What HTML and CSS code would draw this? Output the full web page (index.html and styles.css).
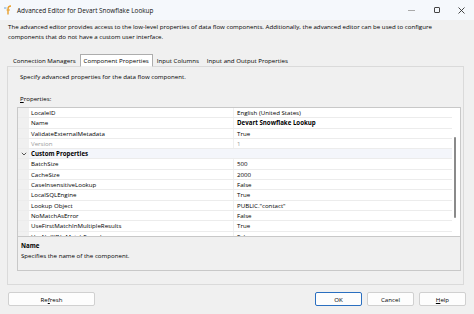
FILE: index.html
```html
<!DOCTYPE html>
<html lang="en">
<head>
    <meta charset="UTF-8">
    <title>Advanced Editor for Devart Snowflake Lookup</title>
    <link rel="stylesheet" href="styles.css">
</head>
<body>
    <div class="titlebar">
        <svg class="app-icon" width="8" height="10" viewBox="0 0 8 10">
            <path d="M0 3h2.5" stroke="#6aa6d8" stroke-width="1"/>
            <path d="M4 9.5V4c0-2 1-3 3-3" stroke="#e8a030" stroke-width="1.4" fill="none"/>
            <path d="M2.5 5h3.5" stroke="#e8a030" stroke-width="1"/>
        </svg>
        <span class="title">Advanced Editor for Devart Snowflake Lookup</span>
        <div class="controls">
            <span class="ctl"><span class="min-line"></span></span>
            <span class="ctl"><span class="max-box"></span></span>
            <span class="ctl">
                <svg width="7" height="7" viewBox="0 0 7 7"><path d="M0.5 0.5l6 6M6.5 0.5l-6 6" stroke="#333" stroke-width="0.9"/></svg>
            </span>
        </div>
    </div>

    <p class="intro">The advanced editor provides access to the low-level properties of data flow components. Additionally, the advanced editor can be used to configure components that do not have a custom user interface.</p>

    <div class="tabs">
        <span class="tab">Connection Managers</span>
        <span class="tab active">Component Properties</span>
        <span class="tab">Input Columns</span>
        <span class="tab">Input and Output Properties</span>
    </div>

    <div class="panel">
        <div class="hint">Specify advanced properties for the data flow component.</div>
        <div class="label"><u>P</u>roperties:</div>

        <div class="grid">
            <div class="rows">
                <div class="row"><span class="gut"></span><span class="name">LocaleID</span><span class="val">English (United States)</span></div>
                <div class="row"><span class="gut"></span><span class="name">Name</span><span class="val bold">Devart Snowflake Lookup</span></div>
                <div class="row"><span class="gut"></span><span class="name">ValidateExternalMetadata</span><span class="val">True</span></div>
                <div class="row dim"><span class="gut"></span><span class="name">Version</span><span class="val">1</span></div>
                <div class="row group">
                    <span class="gut">
                        <svg width="6" height="4" viewBox="0 0 6 4"><path d="M0.8 0.8l2.2 2.2 2.2-2.2" stroke="#444" stroke-width="0.9" fill="none"/></svg>
                    </span>
                    <span class="name">Custom Properties</span><span class="val"></span>
                </div>
                <div class="row"><span class="gut"></span><span class="name">BatchSize</span><span class="val">500</span></div>
                <div class="row"><span class="gut"></span><span class="name">CacheSize</span><span class="val">2000</span></div>
                <div class="row"><span class="gut"></span><span class="name">CaseInsensitiveLookup</span><span class="val">False</span></div>
                <div class="row"><span class="gut"></span><span class="name">LocalSQLEngine</span><span class="val">True</span></div>
                <div class="row"><span class="gut"></span><span class="name">Lookup Object</span><span class="val">PUBLIC."contact"</span></div>
                <div class="row"><span class="gut"></span><span class="name">NoMatchAsError</span><span class="val">False</span></div>
                <div class="row"><span class="gut"></span><span class="name">UseFirstMatchInMultipleResults</span><span class="val">True</span></div>
                <div class="row"><span class="gut"></span><span class="name">UseNullIfNoMatchFound</span><span class="val">False</span></div>
            </div>
            <div class="scroll"><span class="thumb"></span></div>
        </div>

        <div class="desc">
            <div class="desc-title">Name</div>
            <div>Specifies the name of the component.</div>
        </div>
    </div>

    <div class="footer">
        <button class="btn wide">Re<u>f</u>resh</button>
        <span class="spacer"></span>
        <button class="btn primary">OK</button>
        <button class="btn">Cancel</button>
        <button class="btn"><u>H</u>elp</button>
    </div>
</body>
</html>
```

FILE: styles.css
```css
* {
    margin: 0;
    padding: 0;
    box-sizing: border-box;
}
body {
    background-color: #f0f0f0;
    font-family: 'Open Sans', 'Noto Sans', sans-serif;
    font-size: 6.15px;
    color: #000;
    width: 474px;
    height: 314px;
    overflow: hidden;
}
.titlebar {
    height: 20px;
    background-color: #f5f8fc;
    display: flex;
    align-items: center;
    padding-left: 4px;
}
.app-icon {
    margin-right: 5px;
}
.title {
    font-size: 6.4px;
    color: #111;
}
.controls {
    margin-left: auto;
    display: flex;
    height: 20px;
}
.ctl {
    width: 25px;
    display: flex;
    align-items: center;
    justify-content: center;
}
.min-line {
    width: 7px;
    height: 1px;
    background-color: #aaa;
}
.max-box {
    width: 6px;
    height: 6px;
    border: 1px solid #444;
    border-radius: 1px;
}
.intro {
    padding: 2px 24px 0 8px;
    line-height: 10px;
    height: 34px;
}
.tabs {
    display: flex;
    height: 12px;
    padding-left: 9px;
    position: relative;
    z-index: 1;
}
.tab {
    padding: 0 3px;
    line-height: 11px;
    border: 1px solid transparent;
    border-bottom: 0;
}
.tab.active {
    background-color: #fff;
    border-color: #adadad;
    border-bottom: 1px solid #f0f0f0;
    height: 13px;
    margin-bottom: -1px;
}
.panel {
    margin: 0 10px 0 7px;
    height: 219px;
    border: 1px solid #dadada;
    padding: 5px 0 0 9px;
}
.hint {
    line-height: 10px;
    padding-left: 3px;
}
.label {
    line-height: 10px;
    padding-left: 3px;
    margin-top: 12px;
}
.grid {
    margin-top: 3px;
    width: 444px;
    height: 130px;
    border: 1px solid #c8c8c8;
    background-color: #fff;
    display: flex;
    overflow: hidden;
}
.rows {
    flex: 1;
}
.row {
    display: flex;
    height: 10.3px;
    line-height: 10px;
    border-bottom: 1px solid #ececec;
}
.gut {
    width: 11px;
    background-color: #f0f0f0;
    display: flex;
    align-items: center;
    justify-content: center;
}
.name {
    width: 205px;
    padding-left: 2px;
    border-right: 1px solid #f0f0f0;
}
.val {
    flex: 1;
    padding-left: 3px;
}
.bold,
.group .name {
    font-weight: 700;
}
.dim {
    color: #999;
}
.group {
    background-color: #f4f6fb;
}
.group .name {
    border-right: 0;
}
.scroll {
    width: 8px;
    position: relative;
}
.thumb {
    position: absolute;
    left: 2px;
    top: 29px;
    width: 2px;
    height: 81px;
    background-color: #8a8a8a;
    border-radius: 1px;
}
.desc {
    width: 444px;
    height: 34px;
    border: 1px solid #c8c8c8;
    border-top: 0;
    padding: 4px 0 0 3px;
    line-height: 10px;
}
.desc-title {
    font-weight: 700;
}
.footer {
    display: flex;
    padding: 7px 8px 0 8px;
    gap: 5px;
}
.spacer {
    flex: 1;
}
.btn {
    font-family: inherit;
    font-size: 6.15px;
    color: #000;
    background-color: #fdfdfd;
    border: 1px solid #d0d0d0;
    border-radius: 2px;
    width: 47px;
    height: 14px;
}
.btn.wide {
    width: 87px;
}
.btn.primary {
    border-color: #2a6fc0;
}
```
